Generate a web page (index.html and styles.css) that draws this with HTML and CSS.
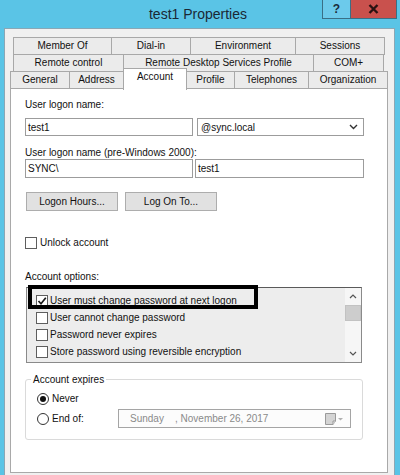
FILE: index.html
```html
<!DOCTYPE html>
<html>
<head>
<meta charset="utf-8">
<link rel="stylesheet" href="styles.css">
</head>
<body>
<div class="titlebar">
  <div></div>
  <div class="title">test1 Properties</div>
  <div class="caption-buttons">
    <div class="cap help">?</div>
    <div class="cap close">
      <svg width="11" height="10" viewBox="0 0 11 10"><path d="M1.5 1 L9.5 9 M9.5 1 L1.5 9" stroke="#2a1212" stroke-width="2.4" fill="none"/></svg>
    </div>
  </div>
</div>
<div class="window">
  <div class="tabrow r1">
    <div class="tab t-member">Member Of</div>
    <div class="tab t-dial">Dial-in</div>
    <div class="tab t-env">Environment</div>
    <div class="tab t-sess">Sessions</div>
  </div>
  <div class="tabrow r2">
    <div class="tab t-remote">Remote control</div>
    <div class="tab t-rdsp">Remote Desktop Services Profile</div>
    <div class="tab t-com">COM+</div>
  </div>
  <div class="tabrow r3">
    <div class="tab t-general">General</div>
    <div class="tab t-address">Address</div>
    <div class="tab t-account active">Account</div>
    <div class="tab t-profile">Profile</div>
    <div class="tab t-tel">Telephones</div>
    <div class="tab t-org">Organization</div>
  </div>
  <div class="panel">
    <div class="lbl">User logon name:</div>
    <div class="row row-a">
      <div class="field f-name">test1</div>
      <div class="field f-combo">@sync.local
        <svg class="chev" width="9" height="6" viewBox="0 0 9 6"><path d="M1 1 L4.5 4.5 L8 1" stroke="#333" stroke-width="1.4" fill="none"/></svg>
      </div>
    </div>
    <div class="lbl lbl-2">User logon name (pre-Windows 2000):</div>
    <div class="row row-b">
      <div class="field f-domain">SYNC\</div>
      <div class="field f-sam">test1</div>
    </div>
    <div class="row row-btns">
      <div class="btn btn-hours">Logon Hours...</div>
      <div class="btn btn-logon">Log On To...</div>
    </div>
    <div class="check-row unlock">
      <span class="cb"></span><span>Unlock account</span>
    </div>
    <div class="lbl lbl-opts">Account options:</div>
    <div class="list">
      <div class="items">
        <div class="item"><span class="cb"><svg width="10" height="10" viewBox="0 0 10 10"><path d="M1.5 5 L4 7.8 L8.8 1.8" stroke="#1a1a1a" stroke-width="1.7" fill="none"/></svg></span><span>User must change password at next logon</span></div>
        <div class="item"><span class="cb"></span><span>User cannot change password</span></div>
        <div class="item"><span class="cb"></span><span>Password never expires</span></div>
        <div class="item"><span class="cb"></span><span>Store password using reversible encryption</span></div>
      </div>
      <div class="scrollbar">
        <div class="sb-btn"><svg width="8" height="5" viewBox="0 0 8 5"><path d="M1 4 L4 1 L7 4" stroke="#555" stroke-width="1.2" fill="none"/></svg></div>
        <div class="sb-thumb"></div>
        <div class="sb-track"></div>
        <div class="sb-btn"><svg width="8" height="5" viewBox="0 0 8 5"><path d="M1 1 L4 4 L7 1" stroke="#555" stroke-width="1.2" fill="none"/></svg></div>
      </div>
      <div class="highlight"></div>
    </div>
    <fieldset class="group">
      <legend>Account expires</legend>
      <div class="group-body">
        <div class="radio-row">
          <span class="radio checked"></span><span>Never</span>
        </div>
        <div class="radio-row end-row">
          <div class="end-label"><span class="radio"></span><span>End of:</span></div>
          <div class="datebox"><span class="datetext">Sunday    , November 26, 2017</span>
            <svg class="cal" width="19" height="12" viewBox="0 0 19 12"><path d="M0.5 0.5 H10.5 V8 L8 11.5 H0.5 Z" fill="#d4d4d4" stroke="#9a9a9a"/><path d="M8 11.5 V8 H10.5" fill="#ececec" stroke="#9a9a9a"/><path d="M13 5 H18 L15.5 7.5 Z" fill="#b0b0b0"/></svg>
          </div>
        </div>
      </div>
    </fieldset>
  </div>
</div>
</body>
</html>
```
FILE: styles.css
```css
body {
  margin: 0;
  width: 400px;
  height: 475px;
  overflow: hidden;
  background: #5ac4e6;
  font-family: "Liberation Sans", Arial, sans-serif;
  font-size: 10px;
  color: #111;
}

.titlebar {
  height: 28px;
  display: grid;
  grid-template-columns: 1fr auto 1fr;
}

.title {
  font-size: 14px;
  line-height: 28px;
  color: #1a2835;
  padding-right: 4px;
}

.caption-buttons {
  justify-self: end;
  align-self: start;
  display: flex;
  margin-right: 3px;
}

.cap {
  height: 19px;
  box-sizing: border-box;
  display: flex;
  align-items: center;
  justify-content: center;
  border: 1px solid #3a6f86;
  border-top: 0;
}

.help {
  width: 28px;
  border-right: 0;
  background: #6ccaeb;
  font-weight: bold;
  font-size: 12px;
  color: #1b2b3a;
}

.close {
  width: 47px;
  background: #c9514d;
}

.window {
  margin: 0 5px 0 4px;
  height: 447px;
  box-sizing: border-box;
  border: 1px solid #8aa7b5;
  border-bottom: 0;
  background: #f0f0f0;
  padding: 8px 6px 0 5px;
}

.tabrow {
  display: flex;
  height: 18px;
  margin-top: -1px;
}

.tabrow.r1 {
  margin-top: 0;
  margin-left: 3px;
}

.tabrow.r2 {
  margin-left: 3px;
}

.tabrow.r3 {
  align-items: flex-end;
}

.tab {
  box-sizing: border-box;
  height: 18px;
  border: 1px solid #a8a8a8;
  background: #ebebeb;
  text-align: center;
  line-height: 16px;
  margin-left: -1px;
  white-space: nowrap;
  color: #111;
}

.tab:first-child {
  margin-left: 0;
}

.tab.active {
  height: 22px;
  margin-bottom: -1px;
  background: #fff;
  border-bottom: 0;
  position: relative;
  z-index: 1;
}

.t-member { width: 99px; }
.t-dial { width: 80px; }
.t-env { width: 106px; }
.t-sess { width: 90px; }
.t-remote { width: 111px; }
.t-rdsp { width: 191px; }
.t-com { width: 71px; }
.t-general { width: 60px; }
.t-address { width: 55px; }
.t-account { width: 64px; }
.t-profile { width: 49px; }
.t-tel { width: 75px; }
.t-org { width: 80px; }

.panel {
  margin-top: -1px;
  height: 385px;
  box-sizing: border-box;
  border: 1px solid #a9a9a9;
  background: #fff;
  padding: 9px 0 0 14px;
}

.lbl {
  height: 13px;
  line-height: 13px;
}

.lbl-2 {
  margin-top: 10px;
}

.lbl-opts {
  margin-top: 21px;
}

.row {
  display: flex;
}

.row-a {
  margin-top: 7px;
}

.field {
  box-sizing: border-box;
  border: 1px solid #9c9c9c;
  background: #fff;
  padding-left: 2px;
  display: flex;
  align-items: center;
}

.row-a .field {
  height: 18px;
}

.row-b .field {
  height: 19px;
}

.f-name { width: 168px; }

.f-combo {
  width: 167px;
  margin-left: 4px;
  padding-left: 3px;
}

.chev {
  margin-left: auto;
  margin-right: 5px;
}

.f-domain { width: 168px; }

.f-sam {
  width: 169px;
  margin-left: 2px;
}

.row-btns {
  margin-top: 14px;
}

.btn {
  box-sizing: border-box;
  width: 92px;
  height: 19px;
  border: 1px solid #adadad;
  background: #e1e1e1;
  display: flex;
  align-items: center;
  justify-content: center;
}

.btn-hours { margin-left: 1px; }
.btn-logon { margin-left: 7px; }

.check-row {
  display: flex;
  align-items: center;
  height: 13px;
}

.unlock {
  margin-top: 25px;
}

.cb {
  box-sizing: border-box;
  width: 12px;
  height: 12px;
  border: 1px solid #5e5e5e;
  background: #fff;
  margin-right: 3px;
  flex: none;
  display: flex;
  align-items: center;
  justify-content: center;
}

.list {
  position: relative;
  margin: 4px 0 0 1px;
  width: 336px;
  height: 76px;
  box-sizing: border-box;
  border: 1px solid #8a8a8a;
  border-top-color: #5a5a5a;
  background: #ededed;
  display: flex;
}

.items {
  flex: 1;
  padding: 4px 0 0 9px;
}

.item {
  height: 17px;
  display: flex;
  align-items: center;
}

.item .cb {
  margin-right: 2px;
}

.scrollbar {
  width: 16px;
  display: flex;
  flex-direction: column;
  background: #f6f6f6;
}

.sb-btn {
  height: 17px;
  display: flex;
  align-items: center;
  justify-content: center;
}

.sb-thumb {
  height: 16px;
  box-sizing: border-box;
  background: #cdcdcd;
  border: 1px solid #c2c2c2;
}

.sb-track {
  flex: 1;
}

.highlight {
  position: absolute;
  left: 1px;
  top: -3px;
  width: 230px;
  height: 24px;
  box-sizing: border-box;
  border: 4px solid #000;
}

.group {
  margin: 10px 0 0 0;
  padding: 0;
  width: 338px;
  box-sizing: border-box;
  border: 1px solid #dadada;
  border-radius: 3px;
}

.group legend {
  margin-left: 5px;
  padding: 0 2px;
  line-height: 13px;
}

.group-body {
  padding: 6px 0 11px 11px;
}

.radio-row {
  display: flex;
  align-items: center;
  height: 13px;
}

.end-row {
  height: 19px;
  margin-top: 4px;
}

.end-label {
  width: 81px;
  flex: none;
  display: flex;
  align-items: center;
}

.radio {
  box-sizing: border-box;
  width: 12px;
  height: 12px;
  border: 1px solid #333;
  border-radius: 50%;
  background: #fff;
  margin-right: 3px;
  flex: none;
  display: flex;
  align-items: center;
  justify-content: center;
}

.radio.checked::after {
  content: "";
  width: 6px;
  height: 6px;
  border-radius: 50%;
  background: #111;
}

.datebox {
  box-sizing: border-box;
  width: 233px;
  height: 19px;
  border: 1px solid #a5a5a5;
  background: #fcfcfc;
  padding-left: 11px;
  display: flex;
  align-items: center;
  color: #8a8a8a;
}

.datetext {
  white-space: pre;
}

.cal {
  margin-left: auto;
  margin-right: 6px;
}
```
